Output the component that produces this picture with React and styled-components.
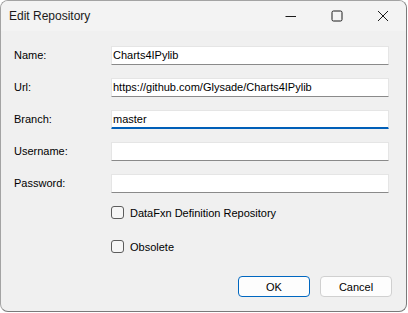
import React from "react";
import styled, { createGlobalStyle } from "styled-components";

const Global = createGlobalStyle`
  html, body { margin: 0; padding: 0; background: #ffffff; }
  body { font-family: "Liberation Sans", Arial, sans-serif; }
`;

const Window = styled.div`
  box-sizing: border-box;
  width: 407px;
  height: 312px;
  border: 1px solid #a3a3a3;
  border-right-color: #7a7a7a;
  border-bottom-color: #7a7a7a;
  border-radius: 8px;
  background: #f0f0f0;
  display: flex;
  flex-direction: column;
  overflow: hidden;
`;

const TitleBar = styled.div`
  height: 30px;
  flex: 0 0 30px;
  display: flex;
  align-items: center;
  background: #f3f3f3;
`;

const Title = styled.div`
  flex: 1;
  padding-left: 8px;
  font-size: 12px;
  color: #1a1a1a;
  line-height: 30px;
`;

const CtrlBtn = styled.div`
  width: 46px;
  height: 30px;
  display: flex;
  align-items: center;
  justify-content: center;
`;

const Body = styled.div`
  flex: 1;
  display: flex;
  flex-direction: column;
  padding: 15px 16px 14px 13px;
`;

const Form = styled.div`
  display: grid;
  grid-template-columns: 97px 278px;
  grid-auto-rows: 19px;
  row-gap: 13px;
  align-items: center;
`;

const Label = styled.div`
  font-size: 11px;
  color: #000;
  line-height: 19px;
`;

const Input = styled.div`
  box-sizing: border-box;
  height: 19px;
  background: #fff;
  border: 1px solid #e5e5e5;
  border-bottom: ${(p) => (p.$focused ? "2px solid #005fb8" : "1px solid #8a8a8a")};
  border-radius: 1px;
  font-size: 11px;
  color: #000;
  padding: 0 3px 0 1px;
  line-height: 17px;
  white-space: nowrap;
  overflow: hidden;
`;

const Checks = styled.div`
  display: flex;
  flex-direction: column;
  gap: 21px;
  margin: 13px 0 0 97px;
`;

const CheckRow = styled.label`
  display: flex;
  align-items: center;
  gap: 6px;
  font-size: 11px;
  color: #000;
  height: 13px;
`;

const Box = styled.span`
  box-sizing: border-box;
  width: 13px;
  height: 13px;
  border: 1px solid #5c5c5c;
  border-radius: 3px;
  background: #f6f6f6;
`;

const Buttons = styled.div`
  margin-top: auto;
  margin-right: -2px;
  display: flex;
  justify-content: flex-end;
  gap: 10px;
`;

const Button = styled.div`
  box-sizing: border-box;
  width: 72px;
  height: 21px;
  border: 1px solid ${(p) => (p.$primary ? "#0067c0" : "#d0d0d0")};
  border-radius: 4px;
  background: #fdfdfd;
  font-size: 11px;
  color: #000;
  display: flex;
  align-items: center;
  justify-content: center;
`;

const fields = [
  ["Name:", "Charts4IPylib"],
  ["Url:", "https://github.com/Glysade/Charts4IPylib"],
  ["Branch:", "master", true],
  ["Username:", ""],
  ["Password:", ""],
];

export default function App() {
  return (
    <>
      <Global />
      <Window>
        <TitleBar>
          <Title>Edit Repository</Title>
          <CtrlBtn>
            <svg width="12" height="12" viewBox="0 0 12 12">
              <line x1="0.5" y1="6.5" x2="11" y2="6.5" stroke="#1a1a1a" strokeWidth="1" />
            </svg>
          </CtrlBtn>
          <CtrlBtn>
            <svg width="12" height="12" viewBox="0 0 12 12">
              <rect x="1" y="1" width="10" height="10" rx="1.5" fill="none" stroke="#1a1a1a" strokeWidth="1" />
            </svg>
          </CtrlBtn>
          <CtrlBtn>
            <svg width="12" height="12" viewBox="0 0 12 12">
              <path d="M1 1 L11 11 M11 1 L1 11" stroke="#1a1a1a" strokeWidth="1" fill="none" />
            </svg>
          </CtrlBtn>
        </TitleBar>
        <Body>
          <Form>
            {fields.map(([l, v, f]) => (
              <React.Fragment key={l}>
                <Label>{l}</Label>
                <Input $focused={f}>{v}</Input>
              </React.Fragment>
            ))}
          </Form>
          <Checks>
            <CheckRow>
              <Box />
              DataFxn Definition Repository
            </CheckRow>
            <CheckRow>
              <Box />
              Obsolete
            </CheckRow>
          </Checks>
          <Buttons>
            <Button $primary>OK</Button>
            <Button>Cancel</Button>
          </Buttons>
        </Body>
      </Window>
    </>
  );
}
